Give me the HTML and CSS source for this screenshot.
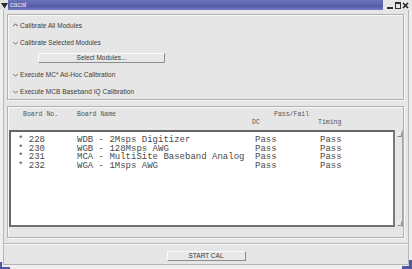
FILE: index.html
```html
<!DOCTYPE html>
<html lang="en">
  <head>
    <meta charset="UTF-8" />
    <title>cacal</title>
    <link rel="stylesheet" href="styles.css">
  </head>
  <body>
    <div class="titlebar">
      <span class="menu-btn">
        <svg width="7" height="7" viewBox="0 0 7 7"><polygon points="0,1 7,1 3.5,6.5" fill="#2a2a2a" /></svg>
      </span>
      <span class="title">cacal</span>
      <span class="controls">
        <svg width="6" height="7" viewBox="0 0 6 7"><rect x="0" y="5" width="6" height="2" fill="#333" /></svg>
        <svg width="6" height="7" viewBox="0 0 6 7"><rect x="0.5" y="0.5" width="5" height="6" fill="none" stroke="#333" /><rect x="0" y="0" width="6" height="2" fill="#333" /></svg>
        <svg width="7" height="7" viewBox="0 0 7 7"><path d="M1 1 L6 6 M6 1 L1 6" stroke="#222" stroke-width="1.6" /></svg>
      </span>
    </div>

    <div class="client">
      <div class="panel options">
        <div class="opt">
          <svg class="diamond" width="5" height="5" viewBox="0 0 6 6"><polyline points="0,4 3,1 6,4" fill="none" stroke="#555" stroke-width="1.2" /></svg>
          Calibrate All Modules
        </div>
        <div class="opt">
          <svg class="diamond" width="5" height="5" viewBox="0 0 6 6"><polyline points="0,2 3,5 6,2" fill="none" stroke="#666" stroke-width="1.1" /></svg>
          Calibrate Selected Modules
        </div>
        <div class="select-row">
          <button type="button" class="btn select-btn">Select Modules...</button>
        </div>
        <div class="opt">
          <svg class="diamond" width="5" height="5" viewBox="0 0 6 6"><polyline points="0,2 3,5 6,2" fill="none" stroke="#666" stroke-width="1.1" /></svg>
          Execute MC* Ad-Hoc Calibration
        </div>
        <div class="opt last">
          <svg class="diamond" width="5" height="5" viewBox="0 0 6 6"><polyline points="0,2 3,5 6,2" fill="none" stroke="#666" stroke-width="1.1" /></svg>
          Execute MCB Baseband IQ Calibration
        </div>
      </div>

      <div class="panel boards">
        <div class="board-head">
          <span class="h-no">Board No.</span>
          <span class="h-name">Board Name</span>
          <span class="h-pf">Pass/Fail</span>
          <span class="h-dc">DC</span>
          <span class="h-timing">Timing</span>
        </div>
        <div class="list-wrap">
          <div class="listbox">
            <div class="row"><span>* 228</span><span>WDB - 2Msps Digitizer</span><span>Pass</span><span>Pass</span></div>
            <div class="row"><span>* 230</span><span>WGB - 128Msps AWG</span><span>Pass</span><span>Pass</span></div>
            <div class="row"><span>* 231</span><span>MCA - MultiSite Baseband Analog</span><span>Pass</span><span>Pass</span></div>
            <div class="row"><span>* 232</span><span>WGA - 1Msps AWG</span><span>Pass</span><span>Pass</span></div>
          </div>
          <div class="scrollbar">
            <span class="arrow"></span>
            <span class="arrow"></span>
          </div>
        </div>
      </div>

      <div class="footer">
        <button type="button" class="btn start-btn">START CAL</button>
      </div>
    </div>

    <span class="resize bl"></span>
    <span class="resize br"></span>
  </body>
</html>
```

FILE: styles.css
```css
/* General Reset */
* {
  margin: 0;
  padding: 0;
  box-sizing: border-box;
}

body {
  position: relative;
  width: 412px;
  height: 269px;
  overflow: hidden;
  background-color: #efefef;
  font-family: "Liberation Sans", Arial, sans-serif;
  color: #3a3a3a;
}

/* Window manager title bar */
.titlebar {
  display: flex;
  height: 10px;
}

.menu-btn {
  width: 8px;
  background: #e2e2e2;
  display: flex;
  align-items: center;
  justify-content: center;
}

.title {
  flex: 1;
  background: linear-gradient(#6c72ba, #565ca7 65%, #767cc0);
  color: #e4e6f6;
  font-size: 7px;
  line-height: 10px;
  padding-left: 2px;
}

.controls {
  width: 29px;
  background: #e6e6e6;
  display: flex;
  align-items: center;
  justify-content: space-between;
  padding: 0 3px 0 4px;
}

/* Client area */
.client {
  margin: 0 3px;
  height: 255px;
  background: #e6e6e6;
  border: 1px solid #b6b6b6;
  border-top: none;
  padding: 4px 4px 0 3px;
}

.panel {
  border: 1px solid #b2b2b2;
  box-shadow: inset 1px 1px 0 #f7f7f7, 1px 1px 0 #f7f7f7;
}

.options {
  height: 86px;
  padding: 2px 0 0 5px;
}

.opt {
  display: flex;
  align-items: center;
  gap: 2px;
  height: 17px;
  font-size: 6.5px;
  letter-spacing: 0.05px;
}

.opt.last {
  height: 16px;
}

.select-row {
  height: 15px;
  padding: 2px 0 0 25px;
}

.btn {
  display: block;
  height: 10px;
  background: #e8e8e8;
  border: 1px solid;
  border-color: #fbfbfb #8c8c8c #8c8c8c #fbfbfb;
  font-family: "Liberation Sans", Arial, sans-serif;
  font-size: 6.5px;
  line-height: 8px;
  color: #3a3a3a;
}

.select-btn {
  width: 127px;
}

/* Boards list */
.boards {
  margin-top: 6px;
  height: 132px;
  padding: 4px 0 10px 1px;
}

.board-head {
  display: grid;
  grid-template-columns: 54px 175px 66px auto;
  grid-template-rows: 8px 8px;
  padding-left: 14px;
  margin-bottom: 3px;
  font-family: "Liberation Mono", monospace;
  font-size: 6.5px;
  line-height: 8px;
  color: #555;
}

.h-no { grid-row: 1; grid-column: 1; }
.h-name { grid-row: 1; grid-column: 2; }
.h-pf { grid-row: 1; grid-column: 3 / span 2; padding-left: 22px; }
.h-dc { grid-row: 2; grid-column: 3; }
.h-timing { grid-row: 2; grid-column: 4; }

.list-wrap {
  display: flex;
  height: 97px;
}

.listbox {
  width: 386px;
  background: #fff;
  border: 2px solid;
  border-color: #666 #7a7a7a #707070 #666;
  padding: 4px 0 0 7px;
  font-family: "Liberation Mono", monospace;
  font-size: 9px;
  line-height: 8.7px;
  color: #4a4a4a;
}

.row {
  display: grid;
  grid-template-columns: 59px 178px 65px auto;
  white-space: pre;
}

.scrollbar {
  width: 8px;
  display: flex;
  flex-direction: column;
  justify-content: space-between;
  padding: 2px 1px 1px 2px;
  border-right: 1px solid #a6a6a6;
}

.arrow {
  width: 5px;
  height: 5px;
  border: 1px solid;
  border-color: #f4f4f4 #8a8a8a #8a8a8a #f4f4f4;
}

/* Bottom button row */
.footer {
  display: flex;
  justify-content: center;
  margin: 5px -4px 0 -3px;
  padding-top: 7px;
  border-top: 1px solid #bcbcbc;
  box-shadow: inset 0 1px 0 #f7f7f7;
}

.start-btn {
  width: 79px;
}

/* Resize corners drawn by the window manager */
.resize {
  position: absolute;
  bottom: 0;
  border-color: #4f56a6;
  border-style: solid;
}

.resize.bl {
  left: 0;
  width: 10px;
  height: 7px;
  border-width: 0 0 2px 2px;
}

.resize.br {
  right: 0;
  width: 10px;
  height: 9px;
  border-width: 0 3px 3px 0;
}
```
